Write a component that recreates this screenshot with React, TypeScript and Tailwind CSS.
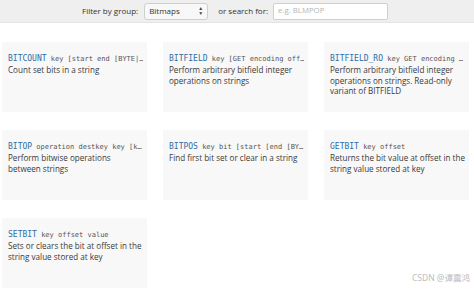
const commands = [
  { name: "BITCOUNT", args: "key [start end [BYTE|…", desc: "Count set bits in a string" },
  { name: "BITFIELD", args: "key [GET encoding off…", desc: "Perform arbitrary bitfield integer operations on strings" },
  { name: "BITFIELD_RO", args: "key GET encoding …", desc: "Perform arbitrary bitfield integer operations on strings. Read-only variant of BITFIELD" },
  { name: "BITOP", args: "operation destkey key [k…", desc: "Perform bitwise operations between strings" },
  { name: "BITPOS", args: "key bit [start [end [BY…", desc: "Find first bit set or clear in a string" },
  { name: "GETBIT", args: "key offset", desc: "Returns the bit value at offset in the string value stored at key" },
  { name: "SETBIT", args: "key offset value", desc: "Sets or clears the bit at offset in the string value stored at key" },
];

const App = () => {
  return (
    <div className="relative w-[474px] h-[291px] bg-white overflow-hidden font-['Open_Sans',sans-serif] text-[#333]">
      <div className="h-[23px] bg-[#efefef] border-b border-[#e4e4e4] flex items-center text-[8px] pl-[82px]">
        <span>Filter by group:</span>
        <div className="ml-[6px] w-[64px] h-[17px] bg-[#f8f8f8] border border-[#cfcfcf] rounded-[3px] flex items-center justify-between px-[4px]">
          <span>Bitmaps</span>
          <span className="flex flex-col leading-none text-[5px] text-[#444]">
            <span>▲</span>
            <span>▼</span>
          </span>
        </div>
        <span className="ml-[10px]">or search for:</span>
        <div className="ml-[5px] w-[115px] h-[17px] bg-white border border-[#cfcfcf] rounded-[2px] flex items-center px-[4px] text-[#b5b5b5] text-[7.8px]">
          e.g. BLMPOP
        </div>
      </div>
      <div className="grid grid-cols-[145px_145px_145px] gap-x-[16px] gap-y-[18px] pl-[2px] pt-[19px]">
        {commands.map((c) => (
          <div key={c.name} className="h-[70px] bg-[#f8f8f8] pl-[6px] pr-[4px] pt-[11px]">
            <div className="font-['DejaVu_Sans_Mono',monospace] text-[7px] whitespace-nowrap overflow-hidden leading-[11px]">
              <span className="text-[#2f6ea5] text-[8px] font-medium">{c.name}</span>{" "}
              <span className="text-[#555]">{c.args}</span>
            </div>
            <div className="text-[8.1px] leading-[10.5px] text-[#3a3a3a]">{c.desc}</div>
          </div>
        ))}
      </div>
      <div className="absolute right-[4px] bottom-[6px] text-[8.5px] text-[#bdbdbd] font-['Noto_Sans','Noto_Sans_CJK_SC',sans-serif]">
        CSDN @谭震鸿
      </div>
    </div>
  );
};

export default App;
